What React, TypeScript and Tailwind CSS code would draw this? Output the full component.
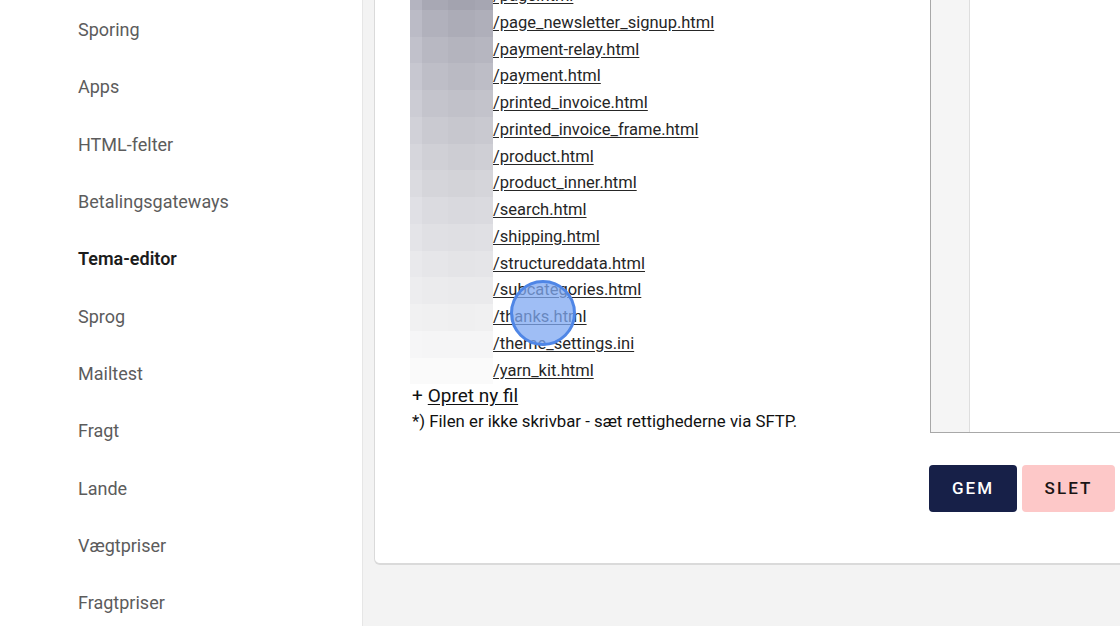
import React from "react";

const navItems = [
  "Sporing",
  "Apps",
  "HTML-felter",
  "Betalingsgateways",
  "Tema-editor",
  "Sprog",
  "Mailtest",
  "Fragt",
  "Lande",
  "Vægtpriser",
  "Fragtpriser",
];

const files = [
  "/page.html",
  "/page_newsletter_signup.html",
  "/payment-relay.html",
  "/payment.html",
  "/printed_invoice.html",
  "/printed_invoice_frame.html",
  "/product.html",
  "/product_inner.html",
  "/search.html",
  "/shipping.html",
  "/structureddata.html",
  "/subcategories.html",
  "/thanks.html",
  "/theme_settings.ini",
  "/yarn_kit.html",
];

// pixelated (censored) column next to file names, fading to white
const colOffsets = [14, 2, -3, 0];
const colWidths = ["w-[12px]", "w-[26px]", "w-[27px]", "w-[18px]"];

function blockColor(row: number, col: number) {
  const t = Math.min(1, Math.pow(row / 14, 0.85));
  const v = Math.round(166 + (250 - 166) * t + colOffsets[col] * (1 - t));
  const b = Math.min(255, Math.round(v + 12 * (1 - t)));
  return `rgb(${v}, ${v}, ${b})`;
}

function Sidebar() {
  return (
    <aside className="w-[363px] shrink-0 border-r border-[#e6e6e6] bg-white pt-[1px]">
      {navItems.map((item) => (
        <div
          key={item}
          className={
            "flex h-[57.3px] items-center pl-[78px] text-[18px] " +
            (item === "Tema-editor" ? "font-semibold text-[#1c1c1c]" : "text-[#5c5c5c]")
          }
        >
          {item}
        </div>
      ))}
    </aside>
  );
}

function FileList() {
  return (
    <div className="w-[555px] shrink-0 pl-[35px]">
      {files.map((f, i) => (
        <div key={f} className="flex h-[26.75px] items-center">
          <div className="flex h-full w-[83px] shrink-0">
            {colWidths.map((w, c) => (
              <div key={c} className={w + " h-full"} style={{ backgroundColor: blockColor(i, c) }} />
            ))}
          </div>
          <a href="#" className="text-[16.5px] text-[#262626] underline underline-offset-2">
            {f}
          </a>
        </div>
      ))}
      <div className="-mt-[1px] flex h-[26px] items-center pl-[2px] text-[19px] text-[#111]">
        <span className="mr-[5px]">+</span>
        <a href="#" className="underline underline-offset-2">
          Opret ny fil
        </a>
      </div>
      <p className="pl-[2px] text-[16.8px] text-[#111]">
        *) Filen er ikke skrivbar - sæt rettighederne via SFTP.
      </p>
    </div>
  );
}

function Editor() {
  return (
    <div className="flex flex-col">
      <div className="flex h-[450px] w-[400px] border-b border-l border-[#a8a8a8] bg-white">
        <div className="w-[39px] border-r border-[#dedede] bg-[#f5f5f5]" />
        <div className="flex-1" />
      </div>
      <div className="mt-[32px] flex gap-[5px]">
        <button className="-ml-[1px] h-[47px] w-[88px] rounded-[4px] bg-[#172048] text-[17px] font-medium tracking-[0.12em] text-white">
          GEM
        </button>
        <button className="h-[47px] w-[93px] rounded-[4px] bg-[#fdc8c8] text-[17px] font-medium tracking-[0.12em] text-[#1a1414]">
          SLET
        </button>
      </div>
    </div>
  );
}

export default function App() {
  return (
    <div
      className="relative flex h-[626px] w-full overflow-hidden bg-[#f3f3f3]"
      style={{ fontFamily: "Roboto, 'Liberation Sans', sans-serif" }}
    >
      <Sidebar />
      <main className="min-w-0 flex-1 pl-[11px]">
        <div className="-mt-[17px] flex w-[1000px] rounded-bl-[6px] border-b-2 border-l border-[#dadada] bg-white pb-[51px]">
          <FileList />
          <Editor />
        </div>
      </main>
      {/* click marker */}
      <div className="pointer-events-none absolute left-[510px] top-[280px] h-[66px] w-[66px] rounded-full border-[3px] border-[#4f86e6] bg-[#7fa8f2]/75" />
    </div>
  );
}
